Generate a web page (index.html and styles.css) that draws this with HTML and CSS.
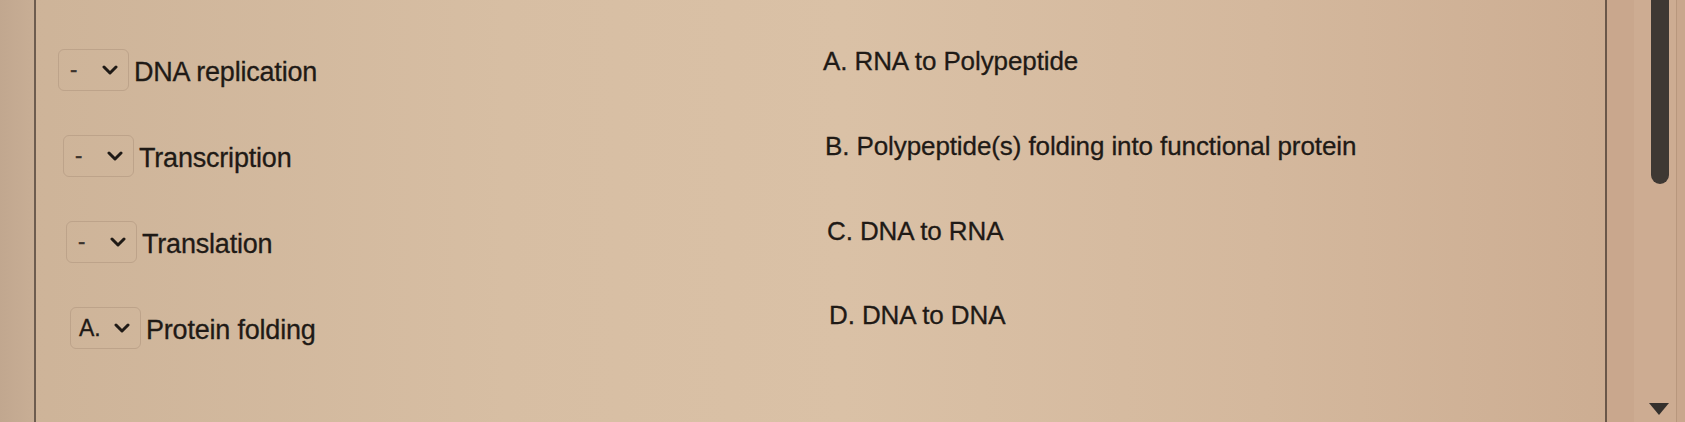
FILE: index.html
```html
<!DOCTYPE html>
<html lang="en">
<head>
<meta charset="utf-8">
<title>Matching</title>
<link rel="stylesheet" href="styles.css">
</head>
<body>
<div class="screen">
  <div class="gutter"></div>
  <div class="content">
    <div class="prompts">
      <div class="row r1">
        <div class="select"><span class="val">-</span><svg class="chev" viewBox="0 0 16 10"><polyline points="2,2 8,8 14,2"/></svg></div>
        <span class="label">DNA replication</span>
      </div>
      <div class="row r2">
        <div class="select"><span class="val">-</span><svg class="chev" viewBox="0 0 16 10"><polyline points="2,2 8,8 14,2"/></svg></div>
        <span class="label">Transcription</span>
      </div>
      <div class="row r3">
        <div class="select"><span class="val">-</span><svg class="chev" viewBox="0 0 16 10"><polyline points="2,2 8,8 14,2"/></svg></div>
        <span class="label">Translation</span>
      </div>
      <div class="row r4">
        <div class="select"><span class="val sel">A.</span><svg class="chev" viewBox="0 0 16 10"><polyline points="2,2 8,8 14,2"/></svg></div>
        <span class="label">Protein folding</span>
      </div>
    </div>
    <div class="answers">
      <div class="ans a1">A. RNA to Polypeptide</div>
      <div class="ans a2">B. Polypeptide(s) folding into functional protein</div>
      <div class="ans a3">C. DNA to RNA</div>
      <div class="ans a4">D. DNA to DNA</div>
    </div>
  </div>
  <div class="scrollbar">
    <div class="track">
      <div class="thumb"></div>
      <div class="arrow"></div>
    </div>
  </div>
</div>
</body>
</html>
```
FILE: styles.css
```css
html, body {
  margin: 0;
  padding: 0;
}
body {
  width: 1685px;
  height: 422px;
  overflow: hidden;
  font-family: "Liberation Sans", Arial, sans-serif;
  color: #1f1a16;
}
.screen {
  display: flex;
  width: 1685px;
  height: 422px;
  background: linear-gradient(90deg, #cdb398 0%, #d7bea3 30%, #dac1a6 50%, #d4b89d 75%, #cbab90 100%);
}
.gutter {
  width: 34px;
  flex: none;
  border-right: 2px solid #6d5c4f;
  background: linear-gradient(90deg, #c1a78f, #c8ae95);
}
.content {
  flex: 1;
  display: flex;
}
.prompts {
  width: 787px;
  flex: none;
  box-sizing: border-box;
  padding-top: 49px;
  padding-left: 22px;
  display: flex;
  flex-direction: column;
  gap: 44px;
}
.row {
  display: flex;
  align-items: center;
  height: 42px;
  gap: 5px;
}
.r2 { margin-left: 5px; }
.r3 { margin-left: 8px; }
.r4 { margin-left: 12px; }
.select {
  width: 71px;
  height: 42px;
  border: 1px solid #bda38a;
  border-radius: 6px;
  display: flex;
  align-items: center;
  justify-content: space-between;
  padding: 0 10px 0 11px;
  box-sizing: border-box;
}
.val {
  font-size: 22px;
  color: #3a322c;
  -webkit-text-stroke: 0.4px #3a322c;
}
.val.sel {
  font-size: 23px;
  margin-left: -3px;
  color: #1f1a16;
  -webkit-text-stroke: 0.3px #1f1a16;
}
.chev {
  width: 16px;
  height: 10px;
  fill: none;
  stroke: #1f1a16;
  stroke-width: 3;
  stroke-linecap: round;
  stroke-linejoin: round;
}
.label {
  font-size: 27px;
  line-height: 42px;
  letter-spacing: -0.2px;
  margin-top: 4px;
  -webkit-text-stroke: 0.3px #1f1a16;
}
.answers {
  padding-top: 46px;
  display: flex;
  flex-direction: column;
  gap: 55px;
}
.ans {
  font-size: 26px;
  line-height: 30px;
  letter-spacing: -0.1px;
  white-space: nowrap;
  -webkit-text-stroke: 0.3px #1f1a16;
}
.a2 { margin-left: 2px; }
.a3 { margin-left: 4px; }
.a4 { margin-left: 6px; margin-top: -1px; }
.scrollbar {
  width: 80px;
  flex: none;
  border-left: 2px solid #6a5749;
  display: flex;
  justify-content: flex-end;
  padding-right: 8px;
  box-sizing: border-box;
  background: #c9a78d;
}
.track {
  width: 43px;
  display: flex;
  flex-direction: column;
  align-items: flex-end;
  justify-content: space-between;
  padding: 0 7px 7px 0;
  box-sizing: border-box;
  background: #cdac92;
  border-right: 1px solid #b8977d;
}
.thumb {
  width: 18px;
  height: 184px;
  background: #3e3833;
  border-radius: 0 0 9px 9px;
}
.arrow {
  width: 0;
  height: 0;
  border-left: 10px solid transparent;
  border-right: 10px solid transparent;
  border-top: 12px solid #34302d;
}
```
